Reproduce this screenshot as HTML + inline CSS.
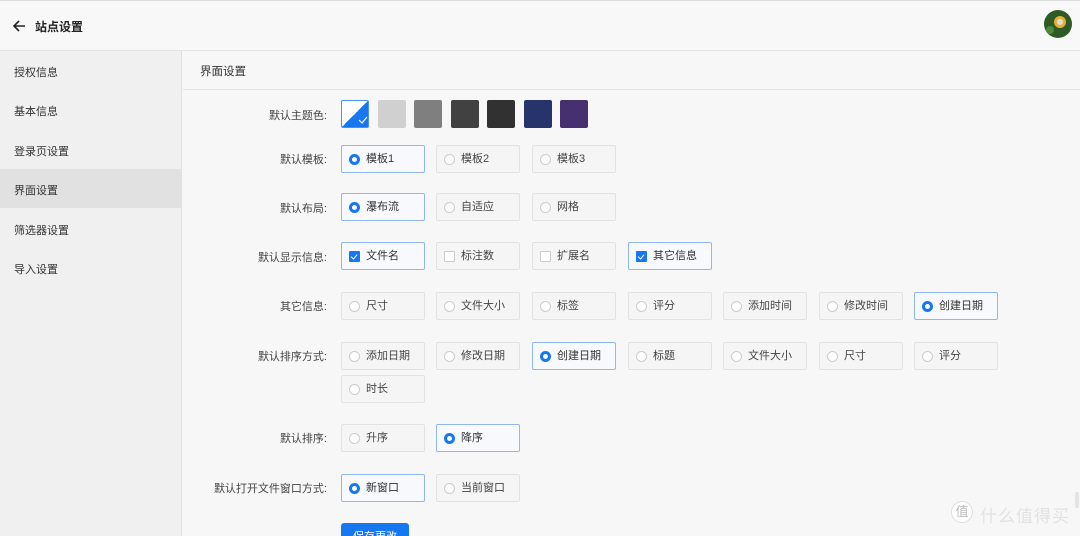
<!DOCTYPE html>
<html style="overflow:hidden;height:536px"><head><meta charset="utf-8"><style>
*{margin:0;padding:0;box-sizing:border-box}
html,body{overflow:hidden}
body{width:1080px;height:536px;background:#f7f7f7;font-family:"Liberation Sans","Noto Sans CJK SC",sans-serif;color:#333;position:relative}
.hdr{position:absolute;left:0;top:0;width:1080px;height:51px;background:#f8f8f8;border-top:1px solid #ddd;border-bottom:1px solid #e2e2e2}
.side{position:absolute;left:0;top:51px;width:182px;height:485px;background:#f0f0f0;border-right:1px solid #e0e0e0}
.si{position:absolute;left:14px;font-size:11px;color:#333}
.act{position:absolute;left:0;top:118px;width:182px;height:39px;background:#e1e1e1}
.ttl{position:absolute;left:183px;top:51px;width:897px;height:39px;border-bottom:1px solid #e4e4e4}
.lbl{position:absolute;right:753px;font-size:11px;color:#444;white-space:nowrap}
.o{position:absolute;width:84px;height:28px;border:1px solid #e2e2e2;border-radius:2px;background:#f5f5f5;font-size:11px;color:#444;line-height:27px;padding-left:24px;white-space:nowrap}
.o.s{border-color:#8fb8f0;background:#f7f9fc;color:#333}
.o:before{content:"";position:absolute;left:7px;top:8px;width:11px;height:11px;border:1px solid #ccc;border-radius:50%;background:#fff;box-sizing:border-box}
.o.s:before{border:3.5px solid #1677f0}
.o.c:before{border-radius:1px}
.o.c.s:before{border:none;background:#1677f0}
.o.c.s:after{content:"";position:absolute;left:10px;top:10px;width:3px;height:5px;border:solid #fff;border-width:0 1.3px 1.3px 0;transform:rotate(40deg)}
.sw{position:absolute;top:100px;width:28px;height:28px;border-radius:2px}
</style></head><body>
<div class="hdr">
<svg style="position:absolute;left:12px;top:18px" width="14" height="14" viewBox="0 0 14 14"><path d="M13 7H2M7 2L2 7l5 5" stroke="#222" stroke-width="1.6" fill="none"/></svg>
<div style="position:absolute;left:35px;top:17px;font-size:12px;font-weight:bold;color:#222">站点设置</div>
<div style="position:absolute;left:1044px;top:9px;width:28px;height:28px;border-radius:50%;background:#2d5a25;overflow:hidden">
<div style="position:absolute;left:10px;top:6px;width:12px;height:12px;border-radius:50%;border:3px solid #e8b030;background:#ddd"></div>
<div style="position:absolute;left:2px;top:16px;width:8px;height:8px;border-radius:50%;background:#4a8a3a"></div></div>
</div>
<div class="side">
<div class="act"></div>
<div class="si" style="top:13px">授权信息</div>
<div class="si" style="top:52px">基本信息</div>
<div class="si" style="top:92px">登录页设置</div>
<div class="si" style="top:131px">界面设置</div>
<div class="si" style="top:171px">筛选器设置</div>
<div class="si" style="top:210px">导入设置</div>
</div>
<div class="ttl"><div style="position:absolute;left:17px;top:12px;font-size:11.5px;color:#333">界面设置</div></div>

<div class="lbl" style="top:107px">默认主题色:</div>
<div class="sw" style="left:341px;border:1px solid #4a90ec;background:linear-gradient(135deg,#fff 50%,#1677f0 50%)"><svg style="position:absolute;left:16px;top:15px" width="10" height="8"><path d="M1 4l3 3 5-6" stroke="#fff" stroke-width="1.2" fill="none"/></svg></div>
<div class="sw" style="left:378px;background:#d0d0d0"></div>
<div class="sw" style="left:414px;background:#7f7f7f"></div>
<div class="sw" style="left:451px;background:#414141"></div>
<div class="sw" style="left:487px;background:#313131"></div>
<div class="sw" style="left:524px;background:#27336b"></div>
<div class="sw" style="left:560px;background:#47306f"></div>

<div class="lbl" style="top:151px">默认模板:</div>
<div class="o s" style="left:341px;top:145px">模板1</div>
<div class="o" style="left:436px;top:145px">模板2</div>
<div class="o" style="left:532px;top:145px">模板3</div>

<div class="lbl" style="top:200px">默认布局:</div>
<div class="o s" style="left:341px;top:193px">瀑布流</div>
<div class="o" style="left:436px;top:193px">自适应</div>
<div class="o" style="left:532px;top:193px">网格</div>

<div class="lbl" style="top:249px">默认显示信息:</div>
<div class="o c s" style="left:341px;top:242px">文件名</div>
<div class="o c" style="left:436px;top:242px">标注数</div>
<div class="o c" style="left:532px;top:242px">扩展名</div>
<div class="o c s" style="left:628px;top:242px">其它信息</div>

<div class="lbl" style="top:298px">其它信息:</div>
<div class="o" style="left:341px;top:292px">尺寸</div>
<div class="o" style="left:436px;top:292px">文件大小</div>
<div class="o" style="left:532px;top:292px">标签</div>
<div class="o" style="left:628px;top:292px">评分</div>
<div class="o" style="left:723px;top:292px">添加时间</div>
<div class="o" style="left:819px;top:292px">修改时间</div>
<div class="o s" style="left:914px;top:292px">创建日期</div>

<div class="lbl" style="top:348px">默认排序方式:</div>
<div class="o" style="left:341px;top:342px">添加日期</div>
<div class="o" style="left:436px;top:342px">修改日期</div>
<div class="o s" style="left:532px;top:342px">创建日期</div>
<div class="o" style="left:628px;top:342px">标题</div>
<div class="o" style="left:723px;top:342px">文件大小</div>
<div class="o" style="left:819px;top:342px">尺寸</div>
<div class="o" style="left:914px;top:342px">评分</div>
<div class="o" style="left:341px;top:375px">时长</div>

<div class="lbl" style="top:430px">默认排序:</div>
<div class="o" style="left:341px;top:424px">升序</div>
<div class="o s" style="left:436px;top:424px">降序</div>

<div class="lbl" style="top:480px">默认打开文件窗口方式:</div>
<div class="o s" style="left:341px;top:474px">新窗口</div>
<div class="o" style="left:436px;top:474px">当前窗口</div>

<div style="position:absolute;left:341px;top:523px;width:68px;height:13px;overflow:hidden;background:#1677f0;border-radius:3px 3px 0 0"><div style="color:#fff;font-size:11px;text-align:center;line-height:28px;width:68px">保存更改</div></div>

<div style="position:absolute;left:1075px;top:492px;width:4px;height:16px;background:#e4e4e4;border-radius:2px"></div>
<div style="position:absolute;left:951px;top:501px;width:22px;height:22px;border-radius:50%;background:#fff;border:1px solid #ddd;color:#bbb;font-size:13px;text-align:center;line-height:20px">值</div>
<div style="position:absolute;left:980px;top:502px;font-size:17px;color:#e2e2e2;letter-spacing:1px">什么值得买</div>
</body></html>
